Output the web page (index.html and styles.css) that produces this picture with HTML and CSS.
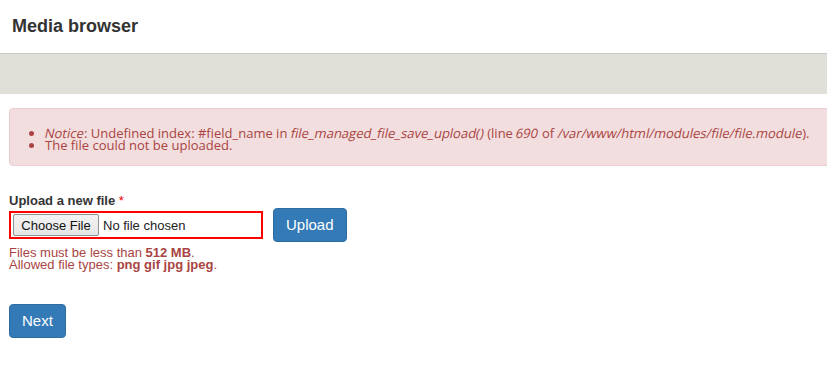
FILE: index.html
```html
<!DOCTYPE html>
<html lang="en">
<head>
<meta charset="utf-8">
<title>Media browser</title>
<link rel="stylesheet" href="styles.css">
</head>
<body>
<header class="page-header">
  <h1 class="page-title">Media browser</h1>
</header>
<div class="tabs-bar"></div>
<main class="content">
  <div class="alert">
    <ul class="alert-list">
      <li><em class="slant">Notice</em>: Undefined index: #field_name in <em class="slant">file_managed_file_save_upload()</em> (line <em class="slant">690</em> of <em class="slant">/var/www/html/modules/file/file.module</em>).</li>
      <li>The file could not be uploaded.</li>
    </ul>
  </div>
  <form class="upload-form">
    <div class="form-item">
      <label class="form-label">Upload a new file <span class="required">*</span></label>
      <div class="upload-row">
        <div class="file-box">
          <span class="file-btn">Choose File</span>
          <span class="file-status">No file chosen</span>
        </div>
        <button type="button" class="btn">Upload</button>
      </div>
      <div class="description">Files must be less than <strong>512 MB</strong>.<br>Allowed file types: <strong>png gif jpg jpeg</strong>.</div>
    </div>
    <div class="form-actions">
      <button type="button" class="btn">Next</button>
    </div>
  </form>
</main>
</body>
</html>
```
FILE: styles.css
```css
html, body {
  margin: 0;
  padding: 0;
  background: #fff;
}
body {
  font-family: "Liberation Sans", Arial, sans-serif;
  color: #333;
  overflow: hidden;
}
.page-header {
  box-sizing: border-box;
  padding: 16px 12px 0;
  border-bottom: 1px solid #cbcbc6;
  height: 54px;
}
.page-title {
  margin: 0;
  font-size: 18px;
  line-height: 20px;
  font-weight: bold;
  color: #333;
}
.tabs-bar {
  height: 40px;
  background: #e0e0d8;
}
.content {
  padding: 14px 0 0 9px;
}
.alert {
  width: 840px;
  box-sizing: border-box;
  background: #f2dede;
  border: 1px solid #ebccd1;
  border-radius: 4px;
  color: #a94442;
  font-family: "Open Sans", sans-serif;
  font-size: 13px;
  line-height: 12px;
  padding: 18px 15px 14px;
  margin-bottom: 28px;
}
.alert-list {
  margin: 0;
  padding-left: 20px;
}
.slant {
  font-style: normal;
  display: inline-block;
  transform: skewX(-12deg);
}
.form-label {
  display: block;
  font-size: 13px;
  font-weight: bold;
  line-height: 14px;
  color: #333;
}
.required {
  color: #e00;
  font-weight: normal;
}
.upload-row {
  display: flex;
  align-items: center;
  gap: 10px;
}
.file-box {
  width: 254px;
  height: 28px;
  box-sizing: border-box;
  border: 2px solid #f00;
  display: flex;
  align-items: center;
  padding: 0 2px;
  gap: 4px;
  font-size: 13px;
}
.file-btn {
  display: flex;
  align-items: center;
  justify-content: center;
  width: 86px;
  height: 22px;
  box-sizing: border-box;
  border: 1px solid #8f8f8f;
  border-radius: 2px;
  background: linear-gradient(#f3f3f3, #e6e6e6);
  color: #111;
}
.file-status {
  color: #222;
}
.btn {
  font-family: "Liberation Sans", Arial, sans-serif;
  font-size: 15px;
  line-height: 20px;
  padding: 6px 12px;
  color: #fff;
  background: #337ab7;
  border: 1px solid #2e6da4;
  border-radius: 4px;
  margin: 0;
}
.description {
  margin-top: 5px;
  font-size: 13px;
  line-height: 12px;
  color: #a94442;
}
.form-actions {
  margin-top: 33px;
}
```
